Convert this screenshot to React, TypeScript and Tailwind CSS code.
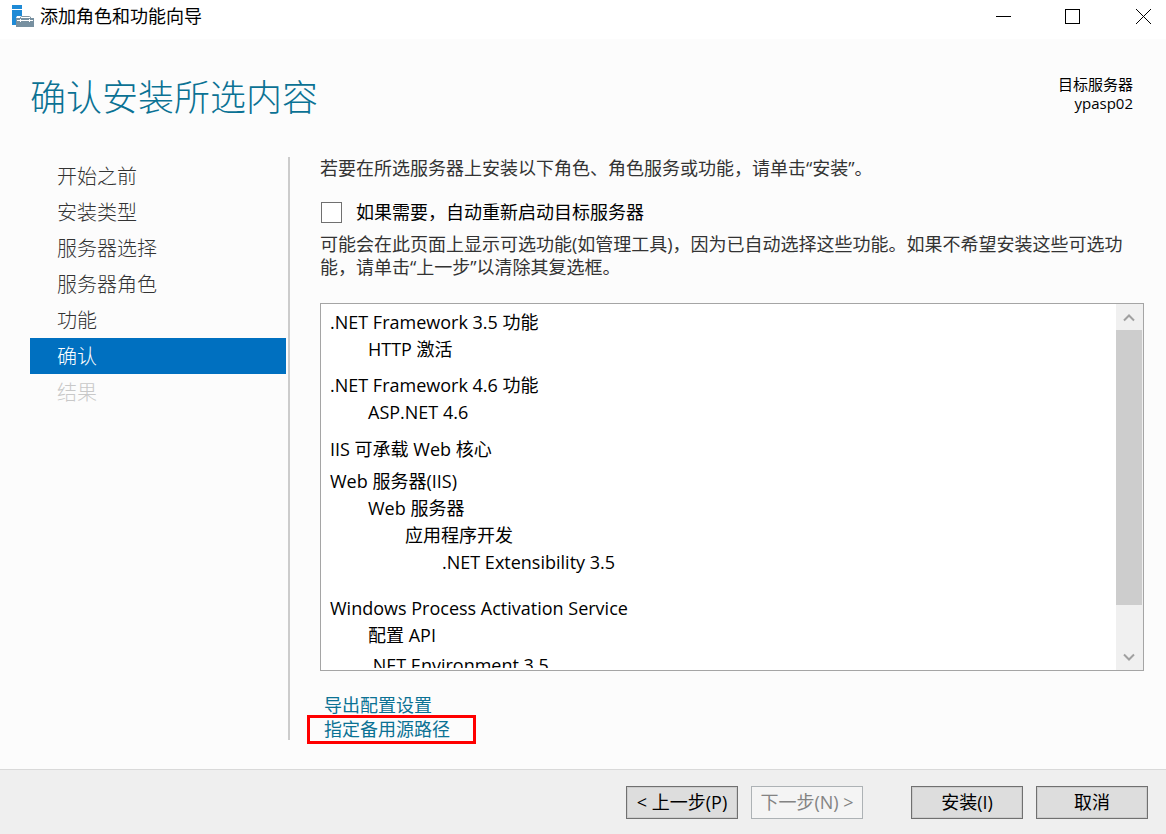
import { useState } from 'react';

interface FeatureRow {
  label: string;
  indent: string;
}

const steps = ['开始之前', '安装类型', '服务器选择', '服务器角色', '功能', '确认', '结果'];
const currentStep = 5;

const groups: { gap: string; rows: FeatureRow[] }[] = [
  {
    gap: 'mb-[9px]',
    rows: [
      { label: '.NET Framework 3.5 功能', indent: 'pl-0' },
      { label: 'HTTP 激活', indent: 'pl-[38px]' },
    ],
  },
  {
    gap: 'mb-[10px]',
    rows: [
      { label: '.NET Framework 4.6 功能', indent: 'pl-0' },
      { label: 'ASP.NET 4.6', indent: 'pl-[38px]' },
    ],
  },
  { gap: 'mb-[5px]', rows: [{ label: 'IIS 可承载 Web 核心', indent: 'pl-0' }] },
  {
    gap: 'mb-[19px]',
    rows: [
      { label: 'Web 服务器(IIS)', indent: 'pl-0' },
      { label: 'Web 服务器', indent: 'pl-[38px]' },
      { label: '应用程序开发', indent: 'pl-[75px]' },
      { label: '.NET Extensibility 3.5', indent: 'pl-[112px]' },
    ],
  },
  {
    gap: 'mb-0',
    rows: [
      { label: 'Windows Process Activation Service', indent: 'pl-0' },
      { label: '配置 API', indent: 'pl-[38px]' },
      { label: '.NET Environment 3.5', indent: 'pl-[38px] pt-[3px]' },
    ],
  },
];

function ServerIcon() {
  return (
    <svg width="23" height="23" viewBox="0 0 23 23" aria-hidden="true">
      <rect x="0" y="0" width="10" height="4" fill="#1e8ad6" />
      <path d="M0 5h10v6H5l-1 2v7H0z" fill="#1e8ad6" />
      <path d="M8.500 13.500v-1.500l1-0.500h8l1 0.500v1.500" fill="none" stroke="#8296a3" />
      <rect x="4" y="13" width="18" height="9" fill="#7790a0" />
      <path d="M5 15.500h16M8.500 14v3M17.500 14v3" stroke="#ffffff" fill="none" />
    </svg>
  );
}

function TitleBar() {
  return (
    <header className="flex h-[39px] shrink-0 items-start justify-between bg-white pl-3">
      <div className="flex items-start gap-[5px] pt-[5px]">
        <ServerIcon />
        <span className="text-[18px] leading-[23px] text-black">添加角色和功能向导</span>
      </div>
      <div className="flex h-8">
        <button aria-label="最小化" className="flex w-[69px] items-center justify-center">
          <svg width="15" height="15" stroke="#000" fill="none"><path d="M0 7.500h15" /></svg>
        </button>
        <button aria-label="最大化" className="flex w-[69px] items-center justify-center">
          <svg width="15" height="15" stroke="#000" fill="none"><rect x="0.500" y="0.500" width="14" height="14" /></svg>
        </button>
        <button aria-label="关闭" className="flex w-[59px] items-center justify-center pl-[14px]">
          <svg width="15" height="15" stroke="#000" fill="none"><path d="M0 0l15 15M15 0L0 15" /></svg>
        </button>
      </div>
    </header>
  );
}

function StepList() {
  return (
    <nav className="w-[260px] shrink-0 border-r-2 border-[#cccccc] pt-px pr-[2px]">
      {steps.map((step, i) => {
        const tone =
          i === currentStep ? 'bg-[#0070c0] text-white' : i > currentStep ? 'text-[#c8c8c8]' : 'text-[#333333]';
        return (
          <button
            key={step}
            disabled={i > currentStep}
            className={`block h-9 w-full pt-px pl-[27px] text-left text-[20px] leading-9 font-light ${tone}`}
          >
            {step}
          </button>
        );
      })}
    </nav>
  );
}

function ScrollBar() {
  return (
    <div className="flex w-[27px] shrink-0 flex-col bg-[#f0f0f0] pr-px">
      <button aria-label="向上滚动" className="flex h-[26px] items-center justify-center">
        <svg width="12" height="9" fill="none" stroke="#a0a0a0" strokeWidth="2"><path d="M1 7.500l5-5 5 5" /></svg>
      </button>
      <div className="grow-[275] bg-[#cdcdcd]" />
      <div className="grow-[39]" />
      <button aria-label="向下滚动" className="flex h-[26px] items-center justify-center">
        <svg width="12" height="9" fill="none" stroke="#a0a0a0" strokeWidth="2"><path d="M1 1.500l5 5 5-5" /></svg>
      </button>
    </div>
  );
}

function FeatureList() {
  return (
    <div className="mt-6 flex min-h-0 flex-1 border border-[#a5a5a5] bg-white">
      <div className="mb-[2px] flex-1 overflow-hidden pt-[5px] pl-[9px] text-[18px] leading-[27px] text-black">
        {groups.map((group) => (
          <ul key={group.rows[0].label} className={group.gap}>
            {group.rows.map((row) => (
              <li key={row.label} className={row.indent}>{row.label}</li>
            ))}
          </ul>
        ))}
      </div>
      <ScrollBar />
    </div>
  );
}

const buttonBase = 'h-[33px] w-[112px] border text-[18px] leading-[29px] whitespace-nowrap';
const buttonOn = 'border-[#707070] bg-[#dddddd] text-black shadow-[inset_0_0_0_1px_#cccccc]';
const buttonOff = 'border-[#adb2b5] bg-[#f4f4f4] text-[#838383]';

export default function App() {
  const [restart, setRestart] = useState(false);

  return (
    <div
      lang="zh-CN"
      className="flex h-screen flex-col bg-[#fcfcfc] font-['Open_Sans','Noto_Sans_CJK_SC',sans-serif]"
    >
      <TitleBar />
      <div className="flex items-start justify-between pt-[33px] pr-[33px] pl-[30px]">
        <h1 className="text-[36px] leading-[52px] font-light text-[#0b7294]">确认安装所选内容</h1>
        <div className="pt-[3px] text-right text-[15px] leading-[19px] text-black">
          <p>目标服务器</p>
          <p>ypasp02</p>
        </div>
      </div>

      <main className="mt-[33px] flex min-h-0 flex-1 pr-[22px] pb-[29px] pl-[30px]">
        <StepList />
        <section className="-mb-1 flex min-w-0 flex-1 flex-col pl-[30px] text-[18px] leading-[23px] text-[#333333]">
          <p>若要在所选服务器上安装以下角色、角色服务或功能，请单击“安装”。</p>
          <label className="mt-[21px] flex items-center gap-[14px] pl-px text-black">
            <input
              type="checkbox"
              checked={restart}
              onChange={(e) => setRestart(e.target.checked)}
              className="size-[21px] appearance-none border border-[#707070] bg-white checked:bg-[#0070c0]"
            />
            如果需要，自动重新启动目标服务器
          </label>
          <p className="mt-[9px]">
            可能会在此页面上显示可选功能(如管理工具)，因为已自动选择这些功能。如果不希望安装这些可选功能，请单击“上一步”以清除其复选框。
          </p>
          <FeatureList />
          <div className="-ml-[13px] flex flex-col items-start pt-[23px] text-[#0b7294]">
            <a href="#export" className="pl-[17px]">导出配置设置</a>
            <a href="#source" className="-mt-[2px] h-[29px] border-3 border-[#ff0000] pr-[23px] pl-[14px]">指定备用源路径</a>
          </div>
        </section>
      </main>

      <footer className="flex h-[65px] shrink-0 justify-end gap-[13px] border-t border-[#d9d9d9] bg-[#efefef] pt-4 pr-[18px]">
        <button className={`${buttonBase} ${buttonOn}`}>&lt; 上一步(P)</button>
        <button disabled className={`${buttonBase} ${buttonOff} mr-[35px]`}>下一步(N) &gt;</button>
        <button className={`${buttonBase} ${buttonOn}`}>安装(I)</button>
        <button className={`${buttonBase} ${buttonOn}`}>取消</button>
      </footer>
    </div>
  );
}
